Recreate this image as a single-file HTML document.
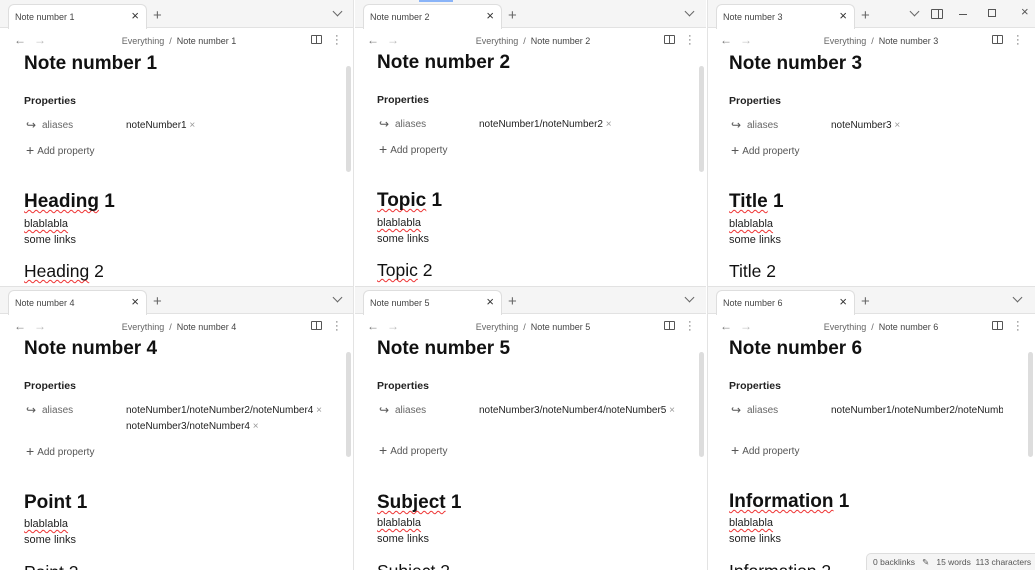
<!DOCTYPE html>
<html><head><meta charset="utf-8"><style>
*{margin:0;padding:0;box-sizing:border-box}
body{width:1035px;height:570px;overflow:hidden;background:#fff;font-family:"Liberation Sans",sans-serif;color:#222;position:relative}
.p{position:absolute;overflow:hidden;background:#fff}
.p>*{position:absolute;white-space:nowrap}
.tb{left:0;top:0;right:0;height:28px;background:#f5f5f5;border-bottom:1px solid #e2e2e2}
.tab{left:8px;top:4px;width:139px;height:25px;background:#fff;border:1px solid #dedede;border-bottom:none;border-radius:6px 6px 0 0;font-size:9px;color:#444;padding:7px 0 0 6px}
.tab i{position:absolute;right:7px;top:3px;font-style:normal;font-size:13px;color:#333}
.plus{left:153px;top:7px;font-size:15px;color:#666}
.chev{top:8px;width:7px;height:7px;border-right:1.3px solid #666;border-bottom:1.3px solid #666;transform:rotate(45deg)}
.nav{top:33px;font-size:12px;color:#777}
.bc{left:0;top:36px;font-size:9px;color:#666;text-align:center}
.book{top:35px;width:11px;height:9px;border:1.2px solid #555;border-radius:1px}
.book:after{content:"";position:absolute;left:3.5px;top:0;height:7px;border-left:1.2px solid #555}
.dots{top:34px;font-size:11px;color:#555;line-height:4px;width:3px}
.t{left:24px;font-size:19px;font-weight:bold;color:#111}
.pr{left:24px;font-size:10.5px;font-weight:bold;color:#222}
.ar{left:26px;font-size:12px;color:#555}
.al{left:42px;font-size:10px;color:#666}
.v{left:126px;font-size:10px;color:#222}
.v b{font-weight:normal;color:#999}
.ad{left:26px;font-size:10px;color:#555}
.ad span{font-size:14px;position:relative;top:1px;margin-right:3px}
.h1{left:24px;font-size:19px;font-weight:bold;color:#111}
.h2{left:24px;font-size:17.5px;color:#111}
.sp{text-decoration:underline wavy #e33;text-decoration-thickness:1px;text-underline-offset:2px;text-decoration-skip-ink:none}
.tx{left:24px;font-size:11px;color:#222}
.sb{width:5px;background:#ddd;border-radius:3px}
</style></head><body>

<!-- pane 1 -->
<div class="p" style="left:0;top:0;width:353px;height:286px">
<div class="tb"></div><div class="tab">Note number 1<i>×</i></div><div class="plus">+</div><div class="chev" style="left:334px"></div>
<div class="nav" style="left:14px">←</div><div class="nav" style="left:34px;color:#bbb">→</div>
<div class="bc" style="width:358px">Everything &nbsp;/&nbsp; <span style="color:#444">Note number 1</span></div>
<div class="book" style="left:311px"></div><div class="dots" style="left:335px">·<br>·<br>·</div>
<div class="t" style="top:53px">Note number 1</div>
<div class="pr" style="top:95px">Properties</div>
<div class="ar" style="top:118px">↪</div><div class="al" style="top:120px">aliases</div>
<div class="v" style="top:120px">noteNumber1 <b>×</b></div>
<div class="ad" style="top:141px"><span>+</span>Add property</div>
<div class="sb" style="left:346px;top:66px;height:106px"></div>
<div class="h1" style="top:191px"><span class="sp">Heading</span> 1</div>
<div class="tx" style="top:218px"><span class="sp">blablabla</span></div>
<div class="tx" style="top:234px">some links</div>
<div class="h2" style="top:261px"><span class="sp">Heading</span> 2</div>
</div>

<!-- pane 2 -->
<div class="p" style="left:355px;top:0;width:351px;height:286px">
<div class="tb"></div><div class="tab">Note number 2<i>×</i></div><div class="plus">+</div><div class="chev" style="left:331px"></div>
<div style="left:64px;top:0;width:34px;height:2px;background:#8ab4f8"></div>
<div class="nav" style="left:12px">←</div><div class="nav" style="left:32px;color:#bbb">→</div>
<div class="bc" style="width:356px">Everything &nbsp;/&nbsp; <span style="color:#444">Note number 2</span></div>
<div class="book" style="left:309px"></div><div class="dots" style="left:333px">·<br>·<br>·</div>
<div class="t" style="top:52px;left:22px">Note number 2</div>
<div class="pr" style="top:94px;left:22px">Properties</div>
<div class="ar" style="top:117px;left:24px">↪</div><div class="al" style="top:119px;left:40px">aliases</div>
<div class="v" style="top:119px;left:124px">noteNumber1/noteNumber2 <b>×</b></div>
<div class="ad" style="top:140px;left:24px"><span>+</span>Add property</div>
<div class="sb" style="left:344px;top:66px;height:106px"></div>
<div class="h1" style="top:190px;left:22px"><span class="sp">Topic</span> 1</div>
<div class="tx" style="top:217px;left:22px"><span class="sp">blablabla</span></div>
<div class="tx" style="top:233px;left:22px">some links</div>
<div class="h2" style="top:260px;left:22px"><span class="sp">Topic</span> 2</div>
</div>

<!-- pane 3 -->
<div class="p" style="left:708px;top:0;width:327px;height:286px">
<div class="tb"></div><div class="tab">Note number 3<i>×</i></div><div class="plus">+</div>
<div class="chev" style="left:203px"></div>
<div style="left:223px;top:9px;width:12px;height:10px;border:1.2px solid #555;border-radius:1px"></div>
<div style="left:230px;top:9px;height:10px;border-left:1.2px solid #555"></div>
<div style="left:251px;top:14px;width:8px;border-top:1.2px solid #555"></div>
<div style="left:280px;top:9px;width:8px;height:8px;border:1.2px solid #555"></div>
<div style="left:313px;top:4px;font-size:13px;color:#555">×</div>
<div class="nav" style="left:12px">←</div><div class="nav" style="left:32px;color:#bbb">→</div>
<div class="bc" style="width:346px">Everything &nbsp;/&nbsp; <span style="color:#444">Note number 3</span></div>
<div class="book" style="left:284px"></div><div class="dots" style="left:308px">·<br>·<br>·</div>
<div class="t" style="top:53px;left:21px">Note number 3</div>
<div class="pr" style="top:95px;left:21px">Properties</div>
<div class="ar" style="top:118px;left:23px">↪</div><div class="al" style="top:120px;left:39px">aliases</div>
<div class="v" style="top:120px;left:123px">noteNumber3 <b>×</b></div>
<div class="ad" style="top:141px;left:23px"><span>+</span>Add property</div>
<div class="h1" style="top:191px;left:21px"><span class="sp">Title</span> 1</div>
<div class="tx" style="top:218px;left:21px"><span class="sp">blablabla</span></div>
<div class="tx" style="top:234px;left:21px">some links</div>
<div class="h2" style="top:261px;left:21px">Title 2</div>
</div>

<!-- pane 4 -->
<div class="p" style="left:0;top:286px;width:353px;height:284px">
<div class="tb" style="border-top:1px solid #e2e2e2"></div><div class="tab">Note number 4<i>×</i></div><div class="plus">+</div><div class="chev" style="left:334px"></div>
<div class="nav" style="left:14px">←</div><div class="nav" style="left:34px;color:#bbb">→</div>
<div class="bc" style="width:358px">Everything &nbsp;/&nbsp; <span style="color:#444">Note number 4</span></div>
<div class="book" style="left:311px"></div><div class="dots" style="left:335px">·<br>·<br>·</div>
<div class="t" style="top:52px">Note number 4</div>
<div class="pr" style="top:94px">Properties</div>
<div class="ar" style="top:117px">↪</div><div class="al" style="top:119px">aliases</div>
<div class="v" style="top:119px">noteNumber1/noteNumber2/noteNumber4 <b>×</b></div>
<div class="v" style="top:135px">noteNumber3/noteNumber4 <b>×</b></div>
<div class="ad" style="top:156px"><span>+</span>Add property</div>
<div class="sb" style="left:346px;top:66px;height:105px"></div>
<div class="h1" style="top:206px">Point 1</div>
<div class="tx" style="top:232px"><span class="sp">blablabla</span></div>
<div class="tx" style="top:248px">some links</div>
<div class="h2" style="top:276px">Point 2</div>
</div>

<!-- pane 5 -->
<div class="p" style="left:355px;top:286px;width:351px;height:284px">
<div class="tb" style="border-top:1px solid #e2e2e2"></div><div class="tab">Note number 5<i>×</i></div><div class="plus">+</div><div class="chev" style="left:331px"></div>
<div class="nav" style="left:12px">←</div><div class="nav" style="left:32px;color:#bbb">→</div>
<div class="bc" style="width:356px">Everything &nbsp;/&nbsp; <span style="color:#444">Note number 5</span></div>
<div class="book" style="left:309px"></div><div class="dots" style="left:333px">·<br>·<br>·</div>
<div class="t" style="top:52px;left:22px">Note number 5</div>
<div class="pr" style="top:94px;left:22px">Properties</div>
<div class="ar" style="top:117px;left:24px">↪</div><div class="al" style="top:119px;left:40px">aliases</div>
<div class="v" style="top:119px;left:124px">noteNumber3/noteNumber4/noteNumber5 <b>×</b></div>
<div class="ad" style="top:155px;left:24px"><span>+</span>Add property</div>
<div class="sb" style="left:344px;top:66px;height:105px"></div>
<div class="h1" style="top:206px;left:22px"><span class="sp">Subject</span> 1</div>
<div class="tx" style="top:231px;left:22px"><span class="sp">blablabla</span></div>
<div class="tx" style="top:247px;left:22px">some links</div>
<div class="h2" style="top:275px;left:22px">Subject 2</div>
</div>

<!-- pane 6 -->
<div class="p" style="left:708px;top:286px;width:327px;height:284px">
<div class="tb" style="border-top:1px solid #e2e2e2"></div><div class="tab">Note number 6<i>×</i></div><div class="plus">+</div><div class="chev" style="left:306px"></div>
<div class="nav" style="left:12px">←</div><div class="nav" style="left:32px;color:#bbb">→</div>
<div class="bc" style="width:346px">Everything &nbsp;/&nbsp; <span style="color:#444">Note number 6</span></div>
<div class="book" style="left:284px"></div><div class="dots" style="left:308px">·<br>·<br>·</div>
<div class="t" style="top:52px;left:21px">Note number 6</div>
<div class="pr" style="top:94px;left:21px">Properties</div>
<div class="ar" style="top:117px;left:23px">↪</div><div class="al" style="top:119px;left:39px">aliases</div>
<div class="v" style="top:119px;left:123px;width:172px;overflow:hidden">noteNumber1/noteNumber2/noteNumber6</div>
<div class="ad" style="top:155px;left:23px"><span>+</span>Add property</div>
<div class="sb" style="left:320px;top:66px;height:105px"></div>
<div class="h1" style="top:205px;left:21px"><span class="sp">Information</span> 1</div>
<div class="tx" style="top:231px;left:21px"><span class="sp">blablabla</span></div>
<div class="tx" style="top:247px;left:21px">some links</div>
<div class="h2" style="top:275px;left:21px">Information 2</div>
</div>

<div style="position:absolute;left:353px;top:0;width:1px;height:570px;background:#e3e3e3"></div>
<div style="position:absolute;left:707px;top:0;width:1px;height:570px;background:#e3e3e3"></div>
<div style="position:absolute;left:866px;top:553px;width:169px;height:17px;background:#f5f5f5;border:1px solid #ddd;border-right:none;border-bottom:none;border-radius:5px 0 0 0;font-size:8.5px;color:#555;padding:3px 0 0 6px;white-space:nowrap">0 backlinks &nbsp; ✎ &nbsp; 15 words &nbsp;113 characters</div>
</body></html>
